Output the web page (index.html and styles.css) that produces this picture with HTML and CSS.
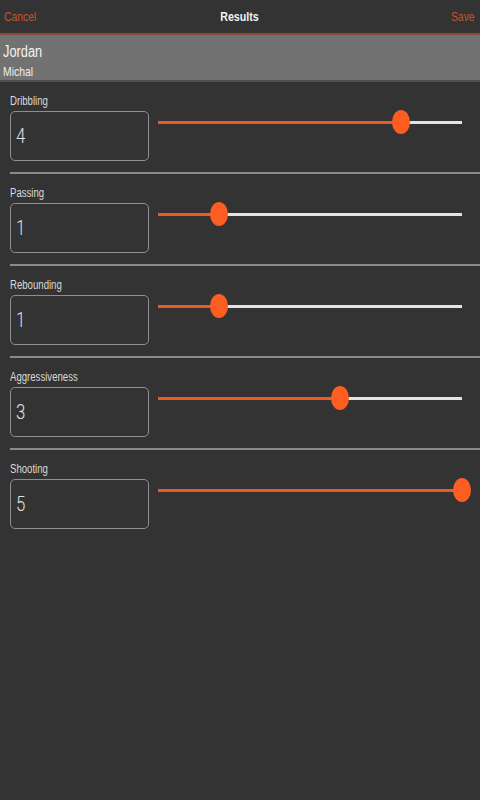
FILE: index.html
```html
<!DOCTYPE html>
<html>
<head>
<meta charset="utf-8">
<link rel="stylesheet" href="styles.css">
</head>
<body>
<div class="topbar">
  <span class="nav-btn cancel">Cancel</span>
  <span class="title">Results</span>
  <span class="nav-btn save">Save</span>
</div>
<div class="player">
  <div class="player-last"><span class="narrow">Jordan</span></div>
  <div class="player-first"><span class="narrow">Michal</span></div>
</div>
<div class="stats">
  <div class="stat">
    <div class="stat-label"><span class="narrow">Dribbling</span></div>
    <div class="stat-body">
      <div class="stat-box"><span class="narrow">4</span></div>
      <div class="slider"><div class="track"><div class="fill" style="width:80%"></div><div class="thumb" style="left:80%"></div></div></div>
    </div>
  </div>
  <div class="stat">
    <div class="stat-label"><span class="narrow">Passing</span></div>
    <div class="stat-body">
      <div class="stat-box"><span class="narrow">1</span></div>
      <div class="slider"><div class="track"><div class="fill" style="width:20%"></div><div class="thumb" style="left:20%"></div></div></div>
    </div>
  </div>
  <div class="stat">
    <div class="stat-label"><span class="narrow">Rebounding</span></div>
    <div class="stat-body">
      <div class="stat-box"><span class="narrow">1</span></div>
      <div class="slider"><div class="track"><div class="fill" style="width:20%"></div><div class="thumb" style="left:20%"></div></div></div>
    </div>
  </div>
  <div class="stat">
    <div class="stat-label"><span class="narrow">Aggressiveness</span></div>
    <div class="stat-body">
      <div class="stat-box"><span class="narrow">3</span></div>
      <div class="slider"><div class="track"><div class="fill" style="width:60%"></div><div class="thumb" style="left:60%"></div></div></div>
    </div>
  </div>
  <div class="stat last">
    <div class="stat-label"><span class="narrow">Shooting</span></div>
    <div class="stat-body">
      <div class="stat-box"><span class="narrow">5</span></div>
      <div class="slider"><div class="track"><div class="fill" style="width:100%"></div><div class="thumb" style="left:100%"></div></div></div>
    </div>
  </div>
</div>
</body>
</html>
```
FILE: styles.css
```css
html, body {
  margin: 0;
  padding: 0;
  background: #333333;
  width: 480px;
  height: 800px;
  overflow: hidden;
  font-family: "Liberation Sans", Arial, sans-serif;
}
.narrow {
  display: inline-block;
  transform: scaleX(0.8);
  transform-origin: left center;
}
.topbar {
  height: 33px;
  display: grid;
  grid-template-columns: 1fr auto 1fr;
  align-items: center;
  padding: 0 5px 0 4px;
  border-bottom: 2px solid #8a4a38;
}
.nav-btn {
  display: inline-block;
  color: #c25331;
  font-size: 13px;
  transform: scaleX(0.8);
}
.cancel {
  justify-self: start;
  transform-origin: left center;
}
.save {
  justify-self: end;
  transform-origin: right center;
}
.title {
  display: inline-block;
  color: #f2f2f2;
  font-size: 13px;
  font-weight: bold;
  transform: scaleX(0.82);
  transform-origin: center;
}
.player {
  background: #737272;
  height: 37px;
  padding: 8px 0 0 3px;
  border-bottom: 2px solid #4e4e4e;
}
.player-last {
  color: #f4f4f4;
  font-size: 16px;
  line-height: 18px;
}
.player-first {
  color: #eeeeee;
  font-size: 13px;
  line-height: 15px;
  margin-top: 3px;
}
.stats {
  padding-left: 10px;
}
.stat {
  padding-top: 12px;
  border-bottom: 2px solid #8a8a8a;
}
.stat.last {
  border-bottom: none;
}
.stat-label {
  color: #dadada;
  font-size: 12px;
  line-height: 14px;
  margin-bottom: 3px;
}
.stat-body {
  display: flex;
  align-items: flex-start;
  padding-bottom: 11px;
}
.stat-box {
  width: 139px;
  height: 50px;
  box-sizing: border-box;
  border: 1px solid #8e8e8e;
  border-radius: 5px;
  display: flex;
  align-items: center;
  padding-left: 5px;
  color: #e2e2e2;
  font-size: 21px;
  font-family: Roboto, "Liberation Sans", sans-serif;
  font-weight: 300;
}
.slider {
  margin-left: 9px;
  width: 304px;
  height: 24px;
  margin-top: -1px;
  display: flex;
  align-items: center;
}
.track {
  position: relative;
  width: 100%;
  height: 3px;
  background: #e4e4e4;
}
.fill {
  height: 100%;
  background: #ec5a25;
}
.thumb {
  position: absolute;
  top: 50%;
  width: 18px;
  height: 24px;
  border-radius: 50%;
  background: #fd5d20;
  transform: translate(-50%, -50%);
}
```
